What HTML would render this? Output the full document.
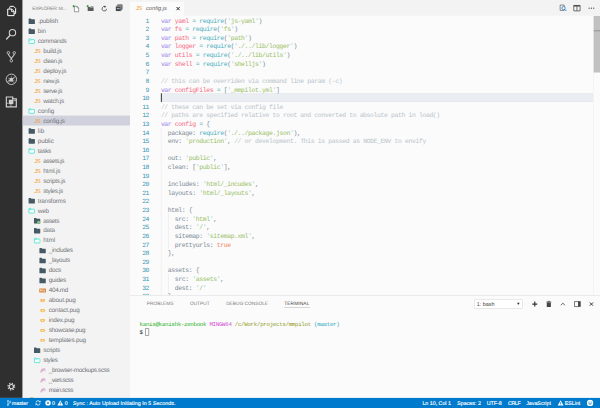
<!DOCTYPE html>
<html><head><meta charset="utf-8"><title>config.js - mmpilot</title>
<style>
html,body{margin:0;padding:0;background:#fff;overflow:hidden;width:600px;height:408px}
#root{position:absolute;left:0;top:0;width:1324px;height:901px;transform-origin:0 0;transform:scale(0.453200);font-family:"Liberation Sans",sans-serif;font-size:13px;color:#616161;overflow:hidden;background:#fff;text-rendering:geometricPrecision}
#root *{box-sizing:border-box}
.abs{position:absolute}
#act{position:absolute;left:0;top:0;width:50px;height:878px;background:#2f2f2f}
#act svg{position:absolute;left:9px}
#side{position:absolute;left:50px;top:0;width:237px;height:878px;background:#f3f3f3;overflow:hidden}
#side .hd{position:absolute;left:21px;top:0;height:35px;line-height:36px;font-size:10.8px;letter-spacing:-0.62px;color:#808080;white-space:nowrap}
.row{position:absolute;left:0;width:237px;height:22px;line-height:22px;white-space:nowrap}
.row.sel{background:#d0d1dd}
.ic{position:absolute}
.lbl{position:absolute;top:0px;color:#74767b;font-size:14px;letter-spacing:-0.5px}
.jsic{position:absolute;font-size:13px;color:#f2a233;line-height:16px;letter-spacing:-1.2px;width:16px;text-align:center;font-family:"Liberation Sans",sans-serif}
#tabs{position:absolute;left:287px;top:0;width:1037px;height:35px;background:#f3f3f3}
#tab{position:absolute;left:0;top:4px;width:119px;height:31px;background:#fbfbfb}
#tab .t{position:absolute;left:35px;top:0;line-height:28px;font-style:italic;font-size:12.6px;color:#606060;white-space:nowrap}
#ed{position:absolute;left:287px;top:35px;width:1037px;height:616px;background:#fbfbfb;overflow:hidden}
.ln{position:absolute;left:0;width:42px;text-align:right;height:19px;line-height:19px;color:#3795b1;font-family:"Liberation Mono",monospace;font-size:14.2px;letter-spacing:-0.82px}
.cl{position:absolute;left:68px;height:19px;line-height:19px;white-space:pre;font-family:"Liberation Mono",monospace;font-size:14.2px;letter-spacing:-0.82px;color:#7a8995}
.k{color:#9a7de8}.v{color:#f8657d}.o{color:#4fb4bc}.f{color:#4aaebd}.s{color:#98bd63}.q{color:#8ccdd3}.c{color:#bac3ca}.p{color:#7a8995}.n{color:#f58158}
.guide{position:absolute;width:1px;background:#e3e3e3}
#panel{position:absolute;left:287px;top:651px;width:1037px;height:227px;background:#fbfbfb;border-top:1px solid #d8d8d8}
.pt{position:absolute;top:0;height:35px;line-height:34px;font-size:10.6px;color:#7c7c7c;white-space:nowrap}
.term{position:absolute;left:21px;height:17px;line-height:17px;font-family:"Liberation Mono",monospace;font-size:12.8px;letter-spacing:-0.68px;white-space:pre;color:#333}
#status{position:absolute;left:0;top:878px;width:1324px;height:23px;background:#007acc;color:#fff;-webkit-text-stroke:0.3px #fff;font-size:11.7px;line-height:22px}
#status span{position:absolute;top:1.6px;white-space:nowrap}
#status svg{position:absolute}
</style></head><body>
<div id="root">

<div id="act">
<svg style="top:0;left:0" width="50" height="50" viewBox="0 0 50 50"><path d="M21.500 19v-3a2 2 0 0 1 2-2h6.500l4.500 4.500v11h-3.500" fill="none" stroke="#fff" stroke-width="2.200"/><path d="M17 20h9l5 5v9.500h-14z" fill="none" stroke="#fff" stroke-width="2.200"/><path d="M25.500 20v5.500h5.500" fill="none" stroke="#fff" stroke-width="1.800"/></svg>
<svg style="top:59px" width="32" height="32" viewBox="0 0 32 32"><circle cx="18.500" cy="13" r="7" fill="none" stroke="#d0d0d0" stroke-width="2.400"/><path d="M13.500 18.500L5.500 27" stroke="#d0d0d0" stroke-width="3" stroke-linecap="round"/></svg>
<svg style="top:109px" width="32" height="32" viewBox="0 0 32 32"><circle cx="9.500" cy="7.500" r="2.800" fill="none" stroke="#d0d0d0" stroke-width="1.800"/><circle cx="22.500" cy="7.500" r="2.800" fill="none" stroke="#d0d0d0" stroke-width="1.800"/><circle cx="16" cy="25" r="2.800" fill="none" stroke="#d0d0d0" stroke-width="1.800"/><path d="M9.500 10.300c0 5 6.500 5.500 6.500 11.900M22.500 10.300c0 5-6.500 5.500-6.500 11.900" fill="none" stroke="#d0d0d0" stroke-width="2.400"/></svg>
<svg style="top:159px" width="32" height="32" viewBox="0 0 32 32"><circle cx="16" cy="16" r="11.500" fill="none" stroke="#d0d0d0" stroke-width="2"/><path d="M6.500 22.500L25.500 9.500" stroke="#d0d0d0" stroke-width="1.600"/><ellipse cx="16" cy="17" rx="3.600" ry="4.600" fill="#d0d0d0"/><path d="M9.500 13l4 2M22.500 13l-4 2M9 18h4.500M23 18h-4.500M10 23l4-2.500M22 23l-4-2.500M16 9.500v3" stroke="#d0d0d0" stroke-width="1.400"/></svg>
<svg style="top:209px" width="32" height="32" viewBox="0 0 32 32"><path d="M5 5h14v4h8v18H5z" fill="none" stroke="#d0d0d0" stroke-width="2.600"/><rect x="10.500" y="11" width="10" height="10" fill="#d0d0d0"/><path d="M19 5v6M27 13h-6M5 19h5M15 27v-6" stroke="#d0d0d0" stroke-width="1.600"/></svg>
<svg style="top:843px;left:15px" width="20" height="20" viewBox="0 0 24 24"><circle cx="12" cy="12" r="5.600" fill="none" stroke="#d8d8d8" stroke-width="3"/><circle cx="12" cy="12" r="8.800" fill="none" stroke="#d8d8d8" stroke-width="3.200" stroke-dasharray="3.400 3.510"/></svg>
</div>

<div id="side">
<div class="hd">EXPLORER: M...</div>
<svg class="ic" style="left:108px;top:9px" width="18" height="20" viewBox="0 0 18 20"><path d="M6.200 5h6l3.500 3.500v8.500h-9.500z" fill="#fff" stroke="#5a5a5a" stroke-width="1.300"/><path d="M12 5v3.500h3.500" fill="none" stroke="#5a5a5a" stroke-width="1.100"/><path d="M4.600 2.200v5M2.100 4.700h5" stroke="#3a9b3a" stroke-width="2.200"/></svg>
<svg class="ic" style="left:139px;top:9px" width="19" height="20" viewBox="0 0 19 20"><path d="M4.500 6.500h5l1.500 1.500h6.500v7.500h-13z" fill="#5a5a5a"/><path d="M10.500 5.500h7v2h-6.500z" fill="#5a5a5a"/><path d="M4.500 2v5M2 4.500h5" stroke="#3a9b3a" stroke-width="2.200"/></svg>
<svg class="ic" style="left:171px;top:10px" width="18" height="18" viewBox="0 0 18 18"><path d="M12.300 5.300A5 5 0 1 0 14.200 9.600" fill="none" stroke="#4a4a4a" stroke-width="1.800"/><path d="M9.200 2.200l4.200 2.400-4.200 2.400z" fill="#4a4a4a"/></svg>
<svg class="ic" style="left:204px;top:8px" width="18" height="18" viewBox="0 0 18 18"><path d="M5 2.500h10.500v10.500" fill="none" stroke="#4a4a4a" stroke-width="1.600"/><path d="M3.500 4.500h10.500v10.500" fill="none" stroke="#4a4a4a" stroke-width="1.600"/><rect x="1.500" y="6" width="11" height="10.500" fill="#4a4a4a"/><rect x="4" y="10" width="6" height="2" fill="#9cc3e8"/></svg>
<div class="row" style="top:35px"><svg class="ic" style="left:12px;top:3.5px" width="16" height="16" viewBox="0 0 16 16"><path d="M1 3.2c0-.7.5-1.2 1.2-1.2h3.6l1.6 1.7h6.4c.7 0 1.2.5 1.2 1.2v7.9c0 .7-.5 1.2-1.2 1.2H2.2c-.7 0-1.2-.5-1.2-1.2z" fill="#455a64"/></svg><span class="lbl" style="left:33.5px;letter-spacing:-0.45px">.publish</span></div>
<div class="row" style="top:57px"><svg class="ic" style="left:12px;top:3.5px" width="16" height="16" viewBox="0 0 16 16"><path d="M1 3.2c0-.7.5-1.2 1.2-1.2h3.6l1.6 1.7h6.4c.7 0 1.2.5 1.2 1.2v7.9c0 .7-.5 1.2-1.2 1.2H2.2c-.7 0-1.2-.5-1.2-1.2z" fill="#455a64"/></svg><span class="lbl" style="left:33.5px;letter-spacing:-0.18px">bin</span></div>
<div class="row" style="top:79px"><svg class="ic" style="left:12px;top:3.5px" width="16" height="16" viewBox="0 0 16 16"><path d="M1.700 3.600c0-.4.300-.7.700-.7h3.300l1.500 1.600h6.400c.4 0 .7.300.7.700v7.200c0 .4-.3.700-.7.700H2.400c-.4 0-.7-.3-.7-.7z" fill="#f6fffd" stroke="#45e3cf" stroke-width="1.800"/><path d="M1.700 5.300h6" stroke="#45e3cf" stroke-width="1.600"/></svg><span class="lbl" style="left:33.5px;letter-spacing:-0.67px">commands</span></div>
<div class="row" style="top:101px"><span class="jsic" style="left:24px;top:3.5px">JS</span><span class="lbl" style="left:45.5px;letter-spacing:-0.40px">build.js</span></div>
<div class="row" style="top:123px"><span class="jsic" style="left:24px;top:3.5px">JS</span><span class="lbl" style="left:45.5px;letter-spacing:-0.76px">clean.js</span></div>
<div class="row" style="top:145px"><span class="jsic" style="left:24px;top:3.5px">JS</span><span class="lbl" style="left:45.5px;letter-spacing:-0.40px">deploy.js</span></div>
<div class="row" style="top:167px"><span class="jsic" style="left:24px;top:3.5px">JS</span><span class="lbl" style="left:45.5px;letter-spacing:-0.65px">new.js</span></div>
<div class="row" style="top:189px"><span class="jsic" style="left:24px;top:3.5px">JS</span><span class="lbl" style="left:45.5px;letter-spacing:-0.86px">serve.js</span></div>
<div class="row" style="top:211px"><span class="jsic" style="left:24px;top:3.5px">JS</span><span class="lbl" style="left:45.5px;letter-spacing:-0.66px">watch.js</span></div>
<div class="row" style="top:233px"><svg class="ic" style="left:12px;top:3.5px" width="16" height="16" viewBox="0 0 16 16"><path d="M1.700 3.600c0-.4.300-.7.700-.7h3.300l1.500 1.600h6.400c.4 0 .7.300.7.700v7.200c0 .4-.3.700-.7.700H2.400c-.4 0-.7-.3-.7-.7z" fill="#f6fffd" stroke="#45e3cf" stroke-width="1.800"/><path d="M1.700 5.300h6" stroke="#45e3cf" stroke-width="1.600"/></svg><span class="lbl" style="left:33.5px;letter-spacing:-0.25px">config</span></div>
<div class="row sel" style="top:255px"><span class="jsic" style="left:24px;top:3.5px">JS</span><span class="lbl" style="left:45.5px;letter-spacing:-0.45px">config.js</span></div>
<div class="row" style="top:277px"><svg class="ic" style="left:12px;top:3.5px" width="16" height="16" viewBox="0 0 16 16"><path d="M1 3.2c0-.7.5-1.2 1.2-1.2h3.6l1.6 1.7h6.4c.7 0 1.2.5 1.2 1.2v7.9c0 .7-.5 1.2-1.2 1.2H2.2c-.7 0-1.2-.5-1.2-1.2z" fill="#455a64"/></svg><span class="lbl" style="left:33.5px;letter-spacing:-0.02px">lib</span></div>
<div class="row" style="top:299px"><svg class="ic" style="left:12px;top:3.5px" width="16" height="16" viewBox="0 0 16 16"><path d="M1 3.2c0-.7.5-1.2 1.2-1.2h3.6l1.6 1.7h6.4c.7 0 1.2.5 1.2 1.2v7.9c0 .7-.5 1.2-1.2 1.2H2.2c-.7 0-1.2-.5-1.2-1.2z" fill="#455a64"/></svg><span class="lbl" style="left:33.5px;letter-spacing:-0.27px">public</span></div>
<div class="row" style="top:321px"><svg class="ic" style="left:12px;top:3.5px" width="16" height="16" viewBox="0 0 16 16"><path d="M1.700 3.600c0-.4.300-.7.700-.7h3.300l1.500 1.600h6.400c.4 0 .7.300.7.700v7.200c0 .4-.3.700-.7.700H2.400c-.4 0-.7-.3-.7-.7z" fill="#f6fffd" stroke="#45e3cf" stroke-width="1.800"/><path d="M1.700 5.300h6" stroke="#45e3cf" stroke-width="1.600"/></svg><span class="lbl" style="left:33.5px;letter-spacing:-0.83px">tasks</span></div>
<div class="row" style="top:343px"><span class="jsic" style="left:24px;top:3.5px">JS</span><span class="lbl" style="left:45.5px;letter-spacing:-0.96px">assets.js</span></div>
<div class="row" style="top:365px"><span class="jsic" style="left:24px;top:3.5px">JS</span><span class="lbl" style="left:45.5px;letter-spacing:-0.41px">html.js</span></div>
<div class="row" style="top:387px"><span class="jsic" style="left:24px;top:3.5px">JS</span><span class="lbl" style="left:45.5px;letter-spacing:-0.62px">scripts.js</span></div>
<div class="row" style="top:409px"><span class="jsic" style="left:24px;top:3.5px">JS</span><span class="lbl" style="left:45.5px;letter-spacing:-0.74px">styles.js</span></div>
<div class="row" style="top:431px"><svg class="ic" style="left:12px;top:3.5px" width="16" height="16" viewBox="0 0 16 16"><path d="M1 3.2c0-.7.5-1.2 1.2-1.2h3.6l1.6 1.7h6.4c.7 0 1.2.5 1.2 1.2v7.9c0 .7-.5 1.2-1.2 1.2H2.2c-.7 0-1.2-.5-1.2-1.2z" fill="#455a64"/></svg><span class="lbl" style="left:33.5px;letter-spacing:-0.48px">transforms</span></div>
<div class="row" style="top:453px"><svg class="ic" style="left:12px;top:3.5px" width="16" height="16" viewBox="0 0 16 16"><path d="M1.700 3.600c0-.4.300-.7.700-.7h3.300l1.500 1.600h6.400c.4 0 .7.300.7.700v7.200c0 .4-.3.700-.7.700H2.400c-.4 0-.7-.3-.7-.7z" fill="#f6fffd" stroke="#45e3cf" stroke-width="1.800"/><path d="M1.700 5.300h6" stroke="#45e3cf" stroke-width="1.600"/></svg><span class="lbl" style="left:33.5px;letter-spacing:-0.61px">web</span></div>
<div class="row" style="top:475px"><svg class="ic" style="left:24px;top:3.5px" width="16" height="16" viewBox="0 0 16 16"><path d="M1 3.2c0-.7.5-1.2 1.2-1.2h3.6l1.6 1.7h6.4c.7 0 1.2.5 1.2 1.2v7.9c0 .7-.5 1.2-1.2 1.2H2.2c-.7 0-1.2-.5-1.2-1.2z" fill="#455a64"/><circle cx="11.3" cy="11.3" r="3.3" fill="#7cc77f"/></svg><span class="lbl" style="left:45.5px;letter-spacing:-1.02px">assets</span></div>
<div class="row" style="top:497px"><svg class="ic" style="left:24px;top:3.5px" width="16" height="16" viewBox="0 0 16 16"><path d="M1 3.2c0-.7.5-1.2 1.2-1.2h3.6l1.6 1.7h6.4c.7 0 1.2.5 1.2 1.2v7.9c0 .7-.5 1.2-1.2 1.2H2.2c-.7 0-1.2-.5-1.2-1.2z" fill="#455a64"/></svg><span class="lbl" style="left:45.5px;letter-spacing:-0.49px">data</span></div>
<div class="row" style="top:519px"><svg class="ic" style="left:24px;top:3.5px" width="16" height="16" viewBox="0 0 16 16"><path d="M1.700 3.600c0-.4.300-.7.700-.7h3.300l1.500 1.600h6.400c.4 0 .7.300.7.700v7.200c0 .4-.3.700-.7.700H2.400c-.4 0-.7-.3-.7-.7z" fill="#f6fffd" stroke="#45e3cf" stroke-width="1.800"/><path d="M1.700 5.300h6" stroke="#45e3cf" stroke-width="1.600"/></svg><span class="lbl" style="left:45.5px;letter-spacing:-0.09px">html</span></div>
<div class="row" style="top:541px"><svg class="ic" style="left:36px;top:3.5px" width="16" height="16" viewBox="0 0 16 16"><path d="M1 3.2c0-.7.5-1.2 1.2-1.2h3.6l1.6 1.7h6.4c.7 0 1.2.5 1.2 1.2v7.9c0 .7-.5 1.2-1.2 1.2H2.2c-.7 0-1.2-.5-1.2-1.2z" fill="#455a64"/></svg><span class="lbl" style="left:57.5px;letter-spacing:-0.75px">_includes</span></div>
<div class="row" style="top:563px"><svg class="ic" style="left:36px;top:3.5px" width="16" height="16" viewBox="0 0 16 16"><path d="M1 3.2c0-.7.5-1.2 1.2-1.2h3.6l1.6 1.7h6.4c.7 0 1.2.5 1.2 1.2v7.9c0 .7-.5 1.2-1.2 1.2H2.2c-.7 0-1.2-.5-1.2-1.2z" fill="#455a64"/></svg><span class="lbl" style="left:57.5px;letter-spacing:-0.72px">_layouts</span></div>
<div class="row" style="top:585px"><svg class="ic" style="left:36px;top:3.5px" width="16" height="16" viewBox="0 0 16 16"><path d="M1 3.2c0-.7.5-1.2 1.2-1.2h3.6l1.6 1.7h6.4c.7 0 1.2.5 1.2 1.2v7.9c0 .7-.5 1.2-1.2 1.2H2.2c-.7 0-1.2-.5-1.2-1.2z" fill="#455a64"/></svg><span class="lbl" style="left:57.5px;letter-spacing:-0.70px">docs</span></div>
<div class="row" style="top:607px"><svg class="ic" style="left:36px;top:3.5px" width="16" height="16" viewBox="0 0 16 16"><path d="M1 3.2c0-.7.5-1.2 1.2-1.2h3.6l1.6 1.7h6.4c.7 0 1.2.5 1.2 1.2v7.9c0 .7-.5 1.2-1.2 1.2H2.2c-.7 0-1.2-.5-1.2-1.2z" fill="#455a64"/></svg><span class="lbl" style="left:57.5px;letter-spacing:-0.53px">guides</span></div>
<div class="row" style="top:629px"><svg class="ic" style="left:36px;top:3.5px" width="16" height="16" viewBox="0 0 16 16"><rect x="0.5" y="3.5" width="15" height="9" rx="1" fill="#d9873d"/><path d="M3 10.3V5.7l2 2.4 2-2.4v4.6M11.3 5.7v4.2M9.5 8.3l1.8 2 1.8-2" stroke="#fff" stroke-width="1.2" fill="none"/></svg><span class="lbl" style="left:57.5px;letter-spacing:-0.67px">404.md</span></div>
<div class="row" style="top:651px"><svg class="ic" style="left:36px;top:3.5px" width="16" height="16" viewBox="0 0 16 16"><path d="M3 5.500h10v2.500c0 2.300-2.200 3.800-5 3.800s-5-1.500-5-3.800z" fill="#f5b13a"/><path d="M5.200 7.800h5.600v.8c0 1.100-1.200 1.800-2.800 1.800s-2.800-.7-2.800-1.800z" fill="#fdf0d5"/></svg><span class="lbl" style="left:57.5px;letter-spacing:-0.35px">about.pug</span></div>
<div class="row" style="top:673px"><svg class="ic" style="left:36px;top:3.5px" width="16" height="16" viewBox="0 0 16 16"><path d="M3 5.500h10v2.500c0 2.300-2.200 3.800-5 3.800s-5-1.500-5-3.800z" fill="#f5b13a"/><path d="M5.200 7.800h5.600v.8c0 1.100-1.200 1.800-2.800 1.800s-2.800-.7-2.800-1.800z" fill="#fdf0d5"/></svg><span class="lbl" style="left:57.5px;letter-spacing:-0.41px">contact.pug</span></div>
<div class="row" style="top:695px"><svg class="ic" style="left:36px;top:3.5px" width="16" height="16" viewBox="0 0 16 16"><path d="M3 5.500h10v2.500c0 2.300-2.200 3.800-5 3.800s-5-1.500-5-3.800z" fill="#f5b13a"/><path d="M5.200 7.800h5.600v.8c0 1.100-1.200 1.800-2.800 1.800s-2.800-.7-2.800-1.800z" fill="#fdf0d5"/></svg><span class="lbl" style="left:57.5px;letter-spacing:-0.48px">index.pug</span></div>
<div class="row" style="top:717px"><svg class="ic" style="left:36px;top:3.5px" width="16" height="16" viewBox="0 0 16 16"><path d="M3 5.500h10v2.500c0 2.300-2.200 3.800-5 3.800s-5-1.500-5-3.800z" fill="#f5b13a"/><path d="M5.200 7.800h5.600v.8c0 1.100-1.200 1.800-2.800 1.800s-2.800-.7-2.800-1.800z" fill="#fdf0d5"/></svg><span class="lbl" style="left:57.5px;letter-spacing:-0.77px">showcase.pug</span></div>
<div class="row" style="top:739px"><svg class="ic" style="left:36px;top:3.5px" width="16" height="16" viewBox="0 0 16 16"><path d="M3 5.500h10v2.500c0 2.300-2.200 3.800-5 3.800s-5-1.500-5-3.800z" fill="#f5b13a"/><path d="M5.200 7.800h5.600v.8c0 1.100-1.200 1.800-2.800 1.800s-2.800-.7-2.800-1.800z" fill="#fdf0d5"/></svg><span class="lbl" style="left:57.5px;letter-spacing:-0.46px">templates.pug</span></div>
<div class="row" style="top:761px"><svg class="ic" style="left:24px;top:3.5px" width="16" height="16" viewBox="0 0 16 16"><path d="M1 3.2c0-.7.5-1.2 1.2-1.2h3.6l1.6 1.7h6.4c.7 0 1.2.5 1.2 1.2v7.9c0 .7-.5 1.2-1.2 1.2H2.2c-.7 0-1.2-.5-1.2-1.2z" fill="#455a64"/></svg><span class="lbl" style="left:45.5px;letter-spacing:-0.53px">scripts</span></div>
<div class="row" style="top:783px"><svg class="ic" style="left:24px;top:3.5px" width="16" height="16" viewBox="0 0 16 16"><path d="M1.700 3.600c0-.4.300-.7.700-.7h3.300l1.500 1.600h6.400c.4 0 .7.300.7.700v7.200c0 .4-.3.700-.7.700H2.400c-.4 0-.7-.3-.7-.7z" fill="#f6fffd" stroke="#45e3cf" stroke-width="1.800"/><path d="M1.700 5.300h6" stroke="#45e3cf" stroke-width="1.600"/></svg><span class="lbl" style="left:45.5px;letter-spacing:-0.69px">styles</span></div>
<div class="row" style="top:805px"><svg class="ic" style="left:36px;top:3.5px" width="16" height="16" viewBox="0 0 16 16"><path d="M14 5.200c-.5-1.600-3.800-1.400-6.200-.1-1.900 1-3 2.300-2.300 3.200.6.800 2.300.9 2.100 2.100-.2 1.200-2.600 2.200-4 1.600-1.200-.6-.2-2.100 2.600-3 2.200-.7 5.200-.6 7.300.2M6 6.500h7" fill="none" stroke="#cd85bd" stroke-width="1.150" stroke-linecap="round"/></svg><span class="lbl" style="left:57.5px;letter-spacing:-0.78px">_browser-mockups.scss</span></div>
<div class="row" style="top:827px"><svg class="ic" style="left:36px;top:3.5px" width="16" height="16" viewBox="0 0 16 16"><path d="M14 5.200c-.5-1.600-3.800-1.400-6.200-.1-1.900 1-3 2.300-2.300 3.200.6.800 2.300.9 2.100 2.100-.2 1.200-2.600 2.200-4 1.600-1.200-.6-.2-2.100 2.600-3 2.200-.7 5.200-.6 7.300.2M6 6.500h7" fill="none" stroke="#cd85bd" stroke-width="1.150" stroke-linecap="round"/></svg><span class="lbl" style="left:57.5px;letter-spacing:-1.25px">_vars.scss</span></div>
<div class="row" style="top:849px"><svg class="ic" style="left:36px;top:3.5px" width="16" height="16" viewBox="0 0 16 16"><path d="M14 5.200c-.5-1.600-3.800-1.400-6.200-.1-1.900 1-3 2.300-2.300 3.200.6.800 2.300.9 2.100 2.100-.2 1.200-2.600 2.200-4 1.600-1.200-.6-.2-2.100 2.600-3 2.200-.7 5.200-.6 7.300.2M6 6.500h7" fill="none" stroke="#cd85bd" stroke-width="1.150" stroke-linecap="round"/></svg><span class="lbl" style="left:57.5px;letter-spacing:-0.95px">main.scss</span></div>
<div class="row" style="top:871px"><svg class="ic" style="left:12px;top:3.500px" width="16" height="16" viewBox="0 0 16 16"><circle cx="8" cy="8" r="6.500" fill="#f0a440"/></svg></div>
</div>

<div id="tabs">
<div id="tab"><span class="jsic" style="left:11px;top:6px">JS</span><span class="t">config.js</span>
<svg class="abs" style="left:99px;top:8px" width="14" height="14" viewBox="0 0 14 14"><path d="M3.500 3.500l7 7M10.500 3.500l-7 7" stroke="#2a2a2a" stroke-width="2.200"/></svg></div>
<svg class="abs" style="left:946px;top:9px" width="18" height="18" viewBox="0 0 18 18"><path d="M3 2h9v12h-9z" fill="none" stroke="#555" stroke-width="1.400"/><circle cx="10.500" cy="9" r="3.600" fill="#fff" stroke="#1e78c8" stroke-width="1.800"/><path d="M13 11.500l3.500 3.500" stroke="#1e78c8" stroke-width="2.200"/></svg>
<svg class="abs" style="left:977px;top:9px" width="18" height="18" viewBox="0 0 18 18"><path d="M2 3h14v12h-14z" fill="none" stroke="#444" stroke-width="1.600"/><path d="M2 4h14" stroke="#444" stroke-width="2.600"/><path d="M9 4v11" stroke="#444" stroke-width="1.600"/></svg>
<svg class="abs" style="left:1009px;top:9px" width="18" height="18" viewBox="0 0 18 18"><circle cx="4" cy="9" r="1.400" fill="#444"/><circle cx="9" cy="9" r="1.400" fill="#444"/><circle cx="14" cy="9" r="1.400" fill="#444"/></svg>
</div>

<div id="ed">
<div class="abs" style="left:68px;top:171px;width:954px;height:19px;background:#eaedf1;border-top:1px solid #e2e6eb;border-bottom:1px solid #e2e6eb"></div>
<div class="guide" style="left:68px;top:247px;height:380px"></div>
<div class="guide" style="left:84px;top:437px;height:76px"></div>
<div class="guide" style="left:84px;top:570px;height:44px"></div>
<div class="abs" style="left:68px;top:171px;width:2px;height:19px;background:#222"></div>
<div class="ln" style="top:2.8px">1</div><div class="cl" style="top:2.8px"><span class="k">var</span> <span class="v">yaml</span> <span class="o">=</span> <span class="f">require</span><span class="p">(</span><span class="q">'</span><span class="s">js-yaml</span><span class="q">'</span><span class="p">)</span></div>
<div class="ln" style="top:21.8px">2</div><div class="cl" style="top:21.8px"><span class="k">var</span> <span class="v">fs</span> <span class="o">=</span> <span class="f">require</span><span class="p">(</span><span class="q">'</span><span class="s">fs</span><span class="q">'</span><span class="p">)</span></div>
<div class="ln" style="top:40.8px">3</div><div class="cl" style="top:40.8px"><span class="k">var</span> <span class="v">path</span> <span class="o">=</span> <span class="f">require</span><span class="p">(</span><span class="q">'</span><span class="s">path</span><span class="q">'</span><span class="p">)</span></div>
<div class="ln" style="top:59.8px">4</div><div class="cl" style="top:59.8px"><span class="k">var</span> <span class="v">logger</span> <span class="o">=</span> <span class="f">require</span><span class="p">(</span><span class="q">'</span><span class="s">./../lib/logger</span><span class="q">'</span><span class="p">)</span></div>
<div class="ln" style="top:78.8px">5</div><div class="cl" style="top:78.8px"><span class="k">var</span> <span class="v">utils</span> <span class="o">=</span> <span class="f">require</span><span class="p">(</span><span class="q">'</span><span class="s">./../lib/utils</span><span class="q">'</span><span class="p">)</span></div>
<div class="ln" style="top:97.8px">6</div><div class="cl" style="top:97.8px"><span class="k">var</span> <span class="v">shell</span> <span class="o">=</span> <span class="f">require</span><span class="p">(</span><span class="q">'</span><span class="s">shelljs</span><span class="q">'</span><span class="p">)</span></div>
<div class="ln" style="top:116.8px">7</div><div class="cl" style="top:116.8px"></div>
<div class="ln" style="top:135.8px">8</div><div class="cl" style="top:135.8px"><span class="c">// this can be overriden via command line param (-c)</span></div>
<div class="ln" style="top:154.8px">9</div><div class="cl" style="top:154.8px"><span class="k">var</span> <span class="v">configFiles</span> <span class="o">=</span> <span class="p">[</span><span class="q">'</span><span class="s">_mmpilot.yml</span><span class="q">'</span><span class="p">]</span></div>
<div class="ln" style="top:173.8px">10</div><div class="cl" style="top:173.8px"></div>
<div class="ln" style="top:192.8px">11</div><div class="cl" style="top:192.8px"><span class="c">// these can be set via config file</span></div>
<div class="ln" style="top:211.8px">12</div><div class="cl" style="top:211.8px"><span class="c">// paths are specified relative to root and converted to absolute path in load()</span></div>
<div class="ln" style="top:230.8px">13</div><div class="cl" style="top:230.8px"><span class="k">var</span> <span class="v">config</span> <span class="o">=</span> <span class="p">{</span></div>
<div class="ln" style="top:249.8px">14</div><div class="cl" style="top:249.8px">  <span class="p">package: </span><span class="f">require</span><span class="p">(</span><span class="q">'</span><span class="s">./../package.json</span><span class="q">'</span><span class="p">),</span></div>
<div class="ln" style="top:268.8px">15</div><div class="cl" style="top:268.8px">  <span class="p">env: </span><span class="q">'</span><span class="s">production</span><span class="q">'</span><span class="p">, </span><span class="c">// or development. This is passed as NODE_ENV to envify</span></div>
<div class="ln" style="top:287.8px">16</div><div class="cl" style="top:287.8px"></div>
<div class="ln" style="top:306.8px">17</div><div class="cl" style="top:306.8px">  <span class="p">out: </span><span class="q">'</span><span class="s">public</span><span class="q">'</span><span class="p">,</span></div>
<div class="ln" style="top:325.8px">18</div><div class="cl" style="top:325.8px">  <span class="p">clean: [</span><span class="q">'</span><span class="s">public</span><span class="q">'</span><span class="p">],</span></div>
<div class="ln" style="top:344.8px">19</div><div class="cl" style="top:344.8px"></div>
<div class="ln" style="top:363.8px">20</div><div class="cl" style="top:363.8px">  <span class="p">includes: </span><span class="q">'</span><span class="s">html/_incudes</span><span class="q">'</span><span class="p">,</span></div>
<div class="ln" style="top:382.8px">21</div><div class="cl" style="top:382.8px">  <span class="p">layouts: </span><span class="q">'</span><span class="s">html/_layouts</span><span class="q">'</span><span class="p">,</span></div>
<div class="ln" style="top:401.8px">22</div><div class="cl" style="top:401.8px"></div>
<div class="ln" style="top:420.8px">23</div><div class="cl" style="top:420.8px">  <span class="p">html: {</span></div>
<div class="ln" style="top:439.8px">24</div><div class="cl" style="top:439.8px">    <span class="p">src: </span><span class="q">'</span><span class="s">html</span><span class="q">'</span><span class="p">,</span></div>
<div class="ln" style="top:458.8px">25</div><div class="cl" style="top:458.8px">    <span class="p">dest: </span><span class="q">'</span><span class="s">/</span><span class="q">'</span><span class="p">,</span></div>
<div class="ln" style="top:477.8px">26</div><div class="cl" style="top:477.8px">    <span class="p">sitemap: </span><span class="q">'</span><span class="s">sitemap.xml</span><span class="q">'</span><span class="p">,</span></div>
<div class="ln" style="top:496.8px">27</div><div class="cl" style="top:496.8px">    <span class="p">prettyurls: </span><span class="n">true</span></div>
<div class="ln" style="top:515.8px">28</div><div class="cl" style="top:515.8px">  <span class="p">},</span></div>
<div class="ln" style="top:534.8px">29</div><div class="cl" style="top:534.8px"></div>
<div class="ln" style="top:553.8px">30</div><div class="cl" style="top:553.8px">  <span class="p">assets: {</span></div>
<div class="ln" style="top:572.8px">31</div><div class="cl" style="top:572.8px">    <span class="p">src: </span><span class="q">'</span><span class="s">assets</span><span class="q">'</span><span class="p">,</span></div>
<div class="ln" style="top:591.8px">32</div><div class="cl" style="top:591.8px">    <span class="p">dest: </span><span class="q">'</span><span class="s">/</span><span class="q">'</span></div>
<div class="ln" style="top:610.8px">33</div><div class="cl" style="top:610.8px">  <span class="p">},</span></div>
<div class="abs" style="left:1022px;top:0;width:1px;height:616px;background:#ececec"></div>
<div class="abs" style="left:1023px;top:0;width:14px;height:125px;background:#c1c1c1"></div>
<div class="abs" style="left:1023px;top:32px;width:14px;height:2px;background:#8f8f8f"></div>
</div>

<div id="panel">
<span class="pt" style="left:37px">PROBLEMS</span>
<span class="pt" style="left:132px">OUTPUT</span>
<span class="pt" style="left:212px">DEBUG CONSOLE</span>
<span class="pt" style="left:340px;color:#424242;letter-spacing:0.3px">TERMINAL</span>
<div class="abs" style="left:340px;top:26px;width:57px;height:1px;background:#a8a8a8"></div>
<div class="abs" style="left:759px;top:9px;width:108px;height:20px;border:1px solid #cfcfcf;background:#fff;font-size:12px;line-height:18px;color:#444;padding-left:5px">1: bash<span class="abs" style="right:5px;top:0;font-size:9px;color:#222">&#9660;</span></div>
<svg class="abs" style="left:885px;top:11px" width="16" height="16" viewBox="0 0 16 16"><path d="M8 2.500v11M2.500 8h11" stroke="#333" stroke-width="2.600"/></svg>
<svg class="abs" style="left:916px;top:11px" width="16" height="16" viewBox="0 0 16 16"><path d="M3.500 4.500h9v10h-9z" fill="#444"/><path d="M2.500 3.500h11M6 3V1.500h4V3" stroke="#444" stroke-width="1.600" fill="none"/></svg>
<svg class="abs" style="left:947px;top:11px" width="16" height="16" viewBox="0 0 16 16"><path d="M3.500 10.500L8 6 12.500 10.500" fill="none" stroke="#444" stroke-width="1.800"/></svg>
<svg class="abs" style="left:979px;top:11px" width="16" height="16" viewBox="0 0 16 16"><path d="M1.500 2.500h13v11h-13z" fill="none" stroke="#444" stroke-width="1.600"/><path d="M9.500 2.500h5v11h-5z" fill="#444"/></svg>
<svg class="abs" style="left:1010px;top:11px" width="16" height="16" viewBox="0 0 16 16"><path d="M4.500 4.500l7 7M11.500 4.500l-7 7" stroke="#333" stroke-width="2.200"/></svg>
<div class="term" style="top:55px"><span style="color:#1fb01f">kanis@kanishk-zenbook</span> <span style="color:#cf3fcf">MINGW64</span> <span style="color:#919a22">/c/Work/projects/mmpilot</span> <span style="color:#1aa5c0">(master)</span></div>
<div class="term" style="top:72px">$ </div>
<div class="abs" style="left:34px;top:73px;width:8px;height:16px;border:1px solid #444"></div>
</div>

<div id="status">
<svg style="left:15px;top:4px" width="10" height="14" viewBox="0 0 10 14"><circle cx="2.500" cy="2.500" r="1.500" fill="none" stroke="#fff" stroke-width="1.200"/><circle cx="2.500" cy="11.500" r="1.500" fill="none" stroke="#fff" stroke-width="1.200"/><circle cx="7.500" cy="4.500" r="1.500" fill="none" stroke="#fff" stroke-width="1.200"/><path d="M2.500 4v6M7.500 6c0 2.500-5 2-5 4.500" fill="none" stroke="#fff" stroke-width="1.200"/></svg>
<span style="left:26px">master</span>
<svg style="left:77px;top:4px" width="14" height="14" viewBox="0 0 14 14"><path d="M2.500 6A4.600 4.600 0 0 1 11 4.500M11.500 8A4.600 4.600 0 0 1 3 9.500" fill="none" stroke="#fff" stroke-width="1.800"/><path d="M12.500 1.500v4h-4zM1.500 12.500v-4h4z" fill="#fff"/></svg>
<svg style="left:99px;top:4px" width="14" height="14" viewBox="0 0 14 14"><circle cx="7" cy="7" r="6" fill="#fff"/><path d="M4.500 4.500l5 5M9.500 4.500l-5 5" stroke="#007acc" stroke-width="1.600"/></svg>
<span style="left:115px">0</span>
<svg style="left:126px;top:4px" width="14" height="14" viewBox="0 0 14 14"><path d="M7 1L13.500 13H.5z" fill="#fff"/><path d="M7 5v4.500M7 10.500v1.500" stroke="#007acc" stroke-width="1.500"/></svg>
<span style="left:143px">0</span>
<span style="left:161px;letter-spacing:0.12px">Sync : Auto Upload Initiating In 5 Seconds.</span>
<span style="left:932px">Ln 10, Col 1</span>
<span style="left:1009px">Spaces: 2</span>
<span style="left:1074px">UTF-8</span>
<span style="left:1121px;letter-spacing:-0.9px">CRLF</span>
<span style="left:1161px">JavaScript</span>
<svg style="left:1230px;top:4px" width="14" height="14" viewBox="0 0 14 14"><path d="M7 1L13.500 13H.5z" fill="#fff"/><path d="M7 5v4.500M7 10.500v1.500" stroke="#007acc" stroke-width="1.500"/></svg>
<span style="left:1246px">ESLint</span>
<svg style="left:1294px;top:3px" width="16" height="16" viewBox="0 0 16 16"><circle cx="8" cy="8" r="7" fill="#fff"/><circle cx="5.500" cy="6" r="1.200" fill="#007acc"/><circle cx="10.500" cy="6" r="1.200" fill="#007acc"/><path d="M4 9.500c1 3 7 3 8 0z" fill="#007acc"/></svg>
</div>

</div>
</body></html>
